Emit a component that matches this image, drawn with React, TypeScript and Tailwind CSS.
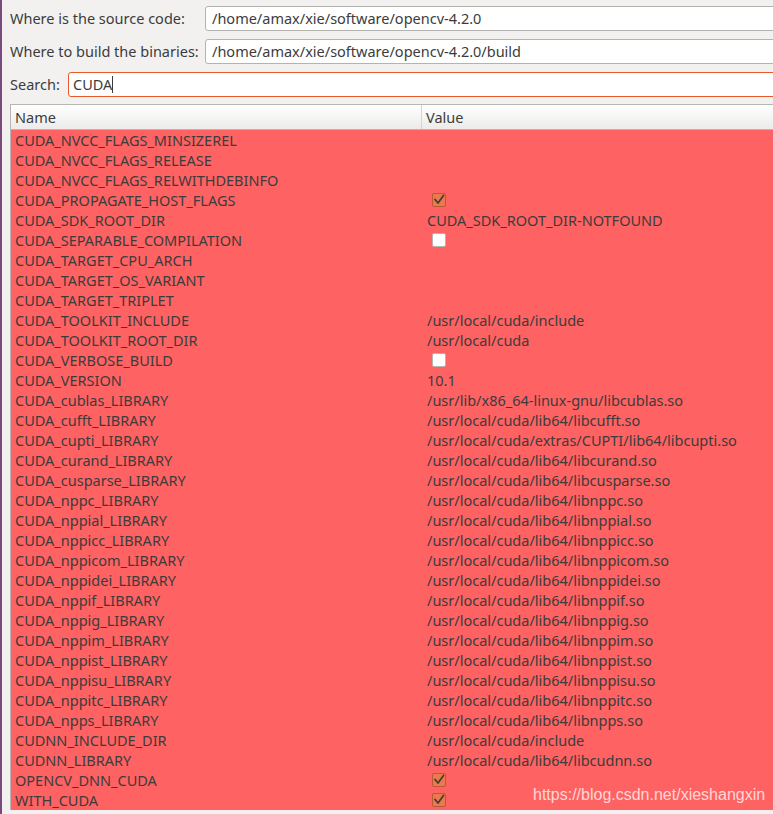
import React from 'react';

type Row = { name: string; value?: string; check?: boolean };

const ROWS: Row[] = [
  { name: 'CUDA_NVCC_FLAGS_MINSIZEREL' },
  { name: 'CUDA_NVCC_FLAGS_RELEASE' },
  { name: 'CUDA_NVCC_FLAGS_RELWITHDEBINFO' },
  { name: 'CUDA_PROPAGATE_HOST_FLAGS', check: true },
  { name: 'CUDA_SDK_ROOT_DIR', value: 'CUDA_SDK_ROOT_DIR-NOTFOUND' },
  { name: 'CUDA_SEPARABLE_COMPILATION', check: false },
  { name: 'CUDA_TARGET_CPU_ARCH' },
  { name: 'CUDA_TARGET_OS_VARIANT' },
  { name: 'CUDA_TARGET_TRIPLET' },
  { name: 'CUDA_TOOLKIT_INCLUDE', value: '/usr/local/cuda/include' },
  { name: 'CUDA_TOOLKIT_ROOT_DIR', value: '/usr/local/cuda' },
  { name: 'CUDA_VERBOSE_BUILD', check: false },
  { name: 'CUDA_VERSION', value: '10.1' },
  { name: 'CUDA_cublas_LIBRARY', value: '/usr/lib/x86_64-linux-gnu/libcublas.so' },
  { name: 'CUDA_cufft_LIBRARY', value: '/usr/local/cuda/lib64/libcufft.so' },
  { name: 'CUDA_cupti_LIBRARY', value: '/usr/local/cuda/extras/CUPTI/lib64/libcupti.so' },
  { name: 'CUDA_curand_LIBRARY', value: '/usr/local/cuda/lib64/libcurand.so' },
  { name: 'CUDA_cusparse_LIBRARY', value: '/usr/local/cuda/lib64/libcusparse.so' },
  { name: 'CUDA_nppc_LIBRARY', value: '/usr/local/cuda/lib64/libnppc.so' },
  { name: 'CUDA_nppial_LIBRARY', value: '/usr/local/cuda/lib64/libnppial.so' },
  { name: 'CUDA_nppicc_LIBRARY', value: '/usr/local/cuda/lib64/libnppicc.so' },
  { name: 'CUDA_nppicom_LIBRARY', value: '/usr/local/cuda/lib64/libnppicom.so' },
  { name: 'CUDA_nppidei_LIBRARY', value: '/usr/local/cuda/lib64/libnppidei.so' },
  { name: 'CUDA_nppif_LIBRARY', value: '/usr/local/cuda/lib64/libnppif.so' },
  { name: 'CUDA_nppig_LIBRARY', value: '/usr/local/cuda/lib64/libnppig.so' },
  { name: 'CUDA_nppim_LIBRARY', value: '/usr/local/cuda/lib64/libnppim.so' },
  { name: 'CUDA_nppist_LIBRARY', value: '/usr/local/cuda/lib64/libnppist.so' },
  { name: 'CUDA_nppisu_LIBRARY', value: '/usr/local/cuda/lib64/libnppisu.so' },
  { name: 'CUDA_nppitc_LIBRARY', value: '/usr/local/cuda/lib64/libnppitc.so' },
  { name: 'CUDA_npps_LIBRARY', value: '/usr/local/cuda/lib64/libnpps.so' },
  { name: 'CUDNN_INCLUDE_DIR', value: '/usr/local/cuda/include' },
  { name: 'CUDNN_LIBRARY', value: '/usr/local/cuda/lib64/libcudnn.so' },
  { name: 'OPENCV_DNN_CUDA', check: true },
  { name: 'WITH_CUDA', check: true },
];

function CheckBox({ checked }: { checked: boolean }) {
  if (!checked) {
    return <div className="ml-[5px] w-[14px] h-[14px] rounded-[2px] bg-white border border-[#b9b4b0]" />;
  }
  return (
    <div className="ml-[5px] w-[14px] h-[14px] rounded-[2px] bg-[#ea7a4c] border border-[#b9593a] flex items-center justify-center">
      <svg width="12" height="12" viewBox="0 0 12 12" fill="none">
        <path d="M2 5.5 L5 9 L10.5 1.5" stroke="#4a3a36" strokeWidth="1.8" strokeLinecap="round" strokeLinejoin="round" />
      </svg>
    </div>
  );
}

function PathField({ label, value }: { label: string; value: string }) {
  return (
    <div className="flex items-center h-[25px]">
      <span className="w-[195px] shrink-0">{label}</span>
      <div className="flex-1 h-[25px] bg-white border border-[#b5b3b0] rounded-[3px] px-[6px] flex items-center">
        {value}
      </div>
    </div>
  );
}

export default function App() {
  return (
    <div
      className="relative w-[773px] h-[814px] overflow-hidden bg-[#f2f1f0] border-l-2 border-[#7b4a7c] text-[#3c3c3c] text-[14.5px] leading-none"
      style={{ fontFamily: '"Noto Sans", "Open Sans", sans-serif' }}
    >
      <div className="w-[900px] pl-[8px] pt-[6px] flex flex-col">
        <PathField label="Where is the source code:" value="/home/amax/xie/software/opencv-4.2.0" />
        <div className="mt-[8px]">
          <PathField label="Where to build the binaries:" value="/home/amax/xie/software/opencv-4.2.0/build" />
        </div>
        <div className="mt-[8px] flex items-center h-[25px]">
          <span className="w-[58px] shrink-0">Search:</span>
          <div className="flex-1 h-[25px] bg-white border border-[#e9582a] rounded-[3px] px-[4px] flex items-center">
            CUDA<span className="inline-block w-px h-[17px] bg-[#3c3c3c]" />
          </div>
        </div>

        <div className="mt-[7px] border-l border-t border-[#b8b6b2]">
          <div className="flex h-[25px] border-b border-[#b8b6b2] bg-gradient-to-b from-white to-[#ecebea]">
            <div className="w-[411px] border-r border-[#d6d4d1] pl-[4px] flex items-center">Name</div>
            <div className="pl-[4px] flex items-center">Value</div>
          </div>
          <div className="bg-[#ff6262]">
            {ROWS.map((r) => (
              <div key={r.name} className="flex h-[20px] items-center">
                <div className="w-[412px] pl-[4px] pt-[1px]">{r.name}</div>
                <div className="pl-[4px]">
                  {r.check !== undefined ? <CheckBox checked={r.check} /> : <span className="block pt-[1px]">{r.value}</span>}
                </div>
              </div>
            ))}
          </div>
        </div>
      </div>

      <div
        className="absolute left-[531px] top-[787px] text-[16px] text-white/75"
        style={{ fontFamily: '"Liberation Sans", Arial, sans-serif' }}
      >
        https://blog.csdn.net/xieshangxin
      </div>
    </div>
  );
}
